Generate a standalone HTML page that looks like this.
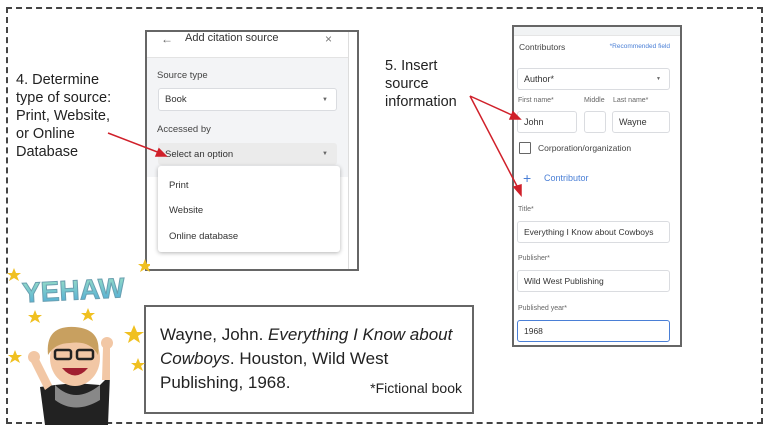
<!DOCTYPE html>
<html><head><meta charset="utf-8"><style>
*{margin:0;padding:0;box-sizing:border-box}
body{width:768px;height:432px;background:#fff;position:relative;overflow:hidden;font-family:"Liberation Sans",Arial,sans-serif;color:#222}
.a{position:absolute;white-space:nowrap}
.f{position:absolute;background:#fff;border:1px solid #dadce0;border-radius:3px;font-size:9px;color:#333;padding-left:6px;display:flex;align-items:center}
.lb{position:absolute;font-size:7px;color:#666}
</style></head><body>
<div class="a" style="left:6px;top:7px;width:757px;height:417px;border:2px dashed #444"></div>

<div class="a" style="left:16px;top:71px;font-size:14.5px;line-height:18px;color:#222">4. Determine<br>type of source:<br>Print, Website,<br>or Online<br>Database</div>
<div class="a" style="left:385px;top:57px;font-size:14.5px;line-height:18px;color:#222">5. Insert<br>source<br>information</div>

<!-- left dialog -->
<div class="a" style="left:145px;top:30px;width:214px;height:241px;border:2px solid #666;background:#fff;overflow:hidden">
 <div class="a" style="left:0;top:25px;width:201px;height:120px;background:#f3f4f6;border-top:1px solid #e3e3e3"></div>
 <div class="a" style="left:201px;top:0;width:1px;height:240px;background:#ddd"></div>
 <div class="a" style="left:14px;top:0px;font-size:12px;color:#666">←</div>
 <div class="a" style="left:38px;top:0px;font-size:11px;color:#333">Add citation source</div>
 <div class="a" style="left:178px;top:0px;font-size:12px;color:#777">×</div>
 <div class="a" style="left:10px;top:38px;font-size:9.5px;color:#444">Source type</div>
 <div class="f" style="left:11px;top:56px;width:179px;height:23px;font-size:9.5px">Book<span style="position:absolute;right:8px;font-size:6px;color:#666">▼</span></div>
 <div class="a" style="left:10px;top:92px;font-size:9.5px;color:#444">Accessed by</div>
 <div class="f" style="left:11px;top:111px;width:179px;height:22px;background:#ebebeb;border-color:#ebebeb;font-size:9.5px">Select an option<span style="position:absolute;right:8px;font-size:6px;color:#666">▼</span></div>
 <div class="a" style="left:11px;top:134px;width:182px;height:86px;background:#fff;box-shadow:0 1px 4px rgba(0,0,0,.3);border-radius:3px;font-size:9.5px;color:#333">
  <div class="a" style="left:11px;top:14px">Print</div>
  <div class="a" style="left:11px;top:39px">Website</div>
  <div class="a" style="left:11px;top:65px">Online database</div>
 </div>
</div>

<!-- right panel -->
<div class="a" style="left:512px;top:25px;width:170px;height:322px;border:2px solid #666;background:#fff;overflow:hidden">
 <div class="a" style="left:0;top:0;width:168px;height:9px;background:#f1f3f4;border-bottom:1px solid #e5e5e5"></div>
 <div class="a" style="left:5px;top:15px;font-size:8.5px;color:#444">Contributors</div>
 <div class="a" style="right:10px;top:16px;font-size:6.5px;color:#4a7fd6">*Recommended field</div>
 <div class="f" style="left:3px;top:41px;width:153px;height:22px">Author*<span style="position:absolute;right:8px;font-size:5px;color:#666">▼</span></div>
 <div class="lb" style="left:4px;top:70px">First name*</div>
 <div class="lb" style="left:70px;top:70px">Middle</div>
 <div class="lb" style="left:99px;top:70px">Last name*</div>
 <div class="f" style="left:3px;top:84px;width:60px;height:22px">John</div>
 <div class="f" style="left:70px;top:84px;width:22px;height:22px"></div>
 <div class="f" style="left:98px;top:84px;width:58px;height:22px">Wayne</div>
 <div class="a" style="left:5px;top:115px;width:12px;height:12px;border:1.5px solid #666;border-radius:1px"></div>
 <div class="a" style="left:24px;top:116px;font-size:8.5px;color:#444">Corporation/organization</div>
 <div class="a" style="left:9px;top:143px;font-size:14px;color:#4a7fd6">+</div>
 <div class="a" style="left:30px;top:146px;font-size:9px;color:#4a7fd6">Contributor</div>
 <div class="lb" style="left:4px;top:179px">Title*</div>
 <div class="f" style="left:3px;top:194px;width:153px;height:22px;font-size:8.5px">Everything I Know about Cowboys</div>
 <div class="lb" style="left:4px;top:228px">Publisher*</div>
 <div class="f" style="left:3px;top:243px;width:153px;height:22px;font-size:8.5px">Wild West Publishing</div>
 <div class="lb" style="left:4px;top:278px">Published year*</div>
 <div class="f" style="left:3px;top:293px;width:153px;height:22px;border:1.5px solid #4a7fd6;font-size:8.5px">1968</div>
</div>

<!-- citation -->
<div class="a" style="left:144px;top:305px;width:330px;height:109px;border:2px solid #666;background:#fff">
 <div class="a" style="left:14px;top:16px;font-size:17px;line-height:24px;color:#222">Wayne, John. <i>Everything I Know about</i><br><i>Cowboys</i>. Houston, Wild West<br>Publishing, 1968.</div>
 <div class="a" style="right:10px;top:73px;font-size:14px;color:#222">*Fictional book</div>
</div>

<!-- bitmoji -->
<svg class="a" style="left:0;top:255px" width="150" height="170" viewBox="0 0 150 170">
 <defs><linearGradient id="g" x1="0" y1="0" x2="0" y2="1"><stop offset="0" stop-color="#9fe3c4"/><stop offset="1" stop-color="#4aa8d8"/></linearGradient></defs>
 <text x="22" y="45" font-family="Liberation Sans" font-weight="bold" font-size="28" fill="url(#g)" stroke="#6a9fb0" stroke-width="1" transform="rotate(-3 70 35)">YEHAW</text>
 <g fill="#f0c020">
  <polygon points="14,13 16,18 21,18 17,21 19,26 14,23 9,26 11,21 7,18 12,18"/>
  <polygon points="145,4 147,9 152,9 148,12 150,17 145,14 140,17 142,12 138,9 143,9"/>
  <polygon points="35,55 37,60 42,60 38,63 40,68 35,65 30,68 32,63 28,60 33,60"/>
  <polygon points="88,53 90,58 95,58 91,61 93,66 88,63 83,66 85,61 81,58 86,58"/>
  <polygon points="134,70 137,77 144,77 138,81 140,88 134,84 128,88 130,81 124,77 131,77"/>
  <polygon points="15,95 17,100 22,100 18,103 20,108 15,105 10,108 12,103 8,100 13,100"/>
  <polygon points="138,103 140,108 145,108 141,111 143,116 138,113 133,116 135,111 131,108 136,108"/>
 </g>
 <path d="M40 132 L55 130 L75 128 L100 130 L110 120 L108 170 L45 170 Z" fill="#222"/>
 <path d="M55 130 Q75 150 100 130 L100 145 Q75 160 55 145Z" fill="#888"/>
 <path d="M30 105 L45 135 L52 130 L38 102Z" fill="#f2c7a5"/>
 <path d="M110 92 L110 125 L102 125 L103 92Z" fill="#f2c7a5"/>
 <circle cx="34" cy="102" r="6" fill="#f2c7a5"/><circle cx="107" cy="88" r="6" fill="#f2c7a5"/>
 <ellipse cx="75" cy="103" rx="25" ry="28" fill="#f2c7a5"/>
 <path d="M48 100 Q45 70 75 72 Q102 74 98 100 Q90 85 70 88 Q55 88 48 100Z" fill="#c8a060"/>
 <rect x="55" y="95" width="16" height="9" rx="2" fill="none" stroke="#222" stroke-width="2.5"/>
 <rect x="77" y="95" width="16" height="9" rx="2" fill="none" stroke="#222" stroke-width="2.5"/>
 <path d="M62 113 Q75 128 88 113Z" fill="#a02030"/>
</svg>

<!-- arrows -->
<svg class="a" style="left:0;top:0" width="768" height="432">
 <g stroke="#d0202a" stroke-width="1.5" fill="#d0202a">
  <line x1="108" y1="133" x2="160" y2="153"/>
  <polygon points="166,156 156,156 159,149" />
  <line x1="470" y1="96" x2="514" y2="116"/>
  <polygon points="520,119 510,119 513,112"/>
  <line x1="470" y1="96" x2="518" y2="188"/>
  <polygon points="521,195 514,187 521,185"/>
 </g>
</svg>
</body></html>
